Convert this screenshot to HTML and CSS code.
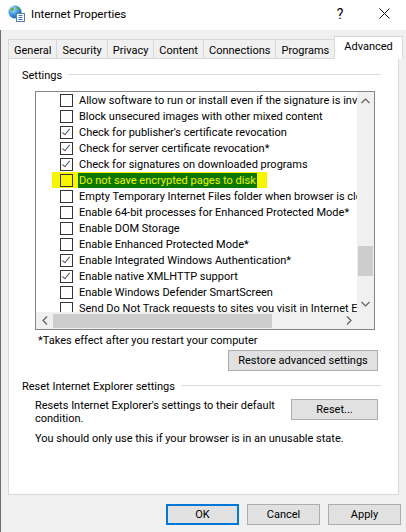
FILE: index.html
```html
<!DOCTYPE html>
<html lang="en">
<head>
  <meta charset="UTF-8" />
  <title>Internet Properties</title>
  <link rel="stylesheet" href="styles.css">
</head>
<body>
  <div class="titlebar">
    <svg class="app-icon" width="17" height="17" viewBox="0 0 17 17">
      <defs>
        <radialGradient id="globe" cx="0.35" cy="0.3" r="0.75">
          <stop offset="0" stop-color="#bfe6ff" />
          <stop offset="0.5" stop-color="#3f9be0" />
          <stop offset="1" stop-color="#1b5fa8" />
        </radialGradient>
      </defs>
      <circle cx="7" cy="7" r="6.5" fill="url(#globe)" />
      <path d="M3 3.5 C4.5 2.5 6 3 6.5 4.5 C5.5 5.5 4.5 5 4 6.5 C3 6 2.3 5 3 3.5 Z" fill="#5fae3c" />
      <path d="M8.5 2 C10 2.2 11.5 3.5 12 5 C10.8 5 10 4.2 9 4.5 C8.4 3.8 8 2.8 8.5 2 Z" fill="#5fae3c" />
      <rect x="8.5" y="8.5" width="8" height="8" fill="#fff" stroke="#5a7fa6" />
      <path d="M10.5 10.5h4M10.5 12.5h4M10.5 14.5h4" stroke="#3a78c2" stroke-width="1" />
    </svg>
    <span class="title">Internet Properties</span>
    <div class="caption">
      <span class="caption-btn help">?</span>
      <span class="caption-btn close">
        <svg width="11" height="11" viewBox="0 0 11 11"><path d="M0.5 0.5l10 10M10.5 0.5l-10 10" stroke="#111" stroke-width="1" /></svg>
      </span>
    </div>
  </div>

  <div class="window">
    <div class="tabs">
      <div class="tab">General</div>
      <div class="tab">Security</div>
      <div class="tab">Privacy</div>
      <div class="tab">Content</div>
      <div class="tab">Connections</div>
      <div class="tab">Programs</div>
      <div class="tab active">Advanced</div>
    </div>

    <div class="panel">
      <div class="group-head"><span>Settings</span><span class="rule"></span></div>

      <div class="listbox">
        <div class="items">
          <div class="item"><span class="check"></span><span class="label">Allow software to run or install even if the signature is invalid</span></div>
          <div class="item"><span class="check"></span><span class="label">Block unsecured images with other mixed content</span></div>
          <div class="item"><span class="check on"></span><span class="label">Check for publisher's certificate revocation</span></div>
          <div class="item"><span class="check on"></span><span class="label">Check for server certificate revocation*</span></div>
          <div class="item"><span class="check on"></span><span class="label">Check for signatures on downloaded programs</span></div>
          <div class="item">
            <span class="marker"><span class="check"></span><span class="label selected">Do not save encrypted pages to disk</span></span>
          </div>
          <div class="item"><span class="check"></span><span class="label">Empty Temporary Internet Files folder when browser is closed</span></div>
          <div class="item"><span class="check"></span><span class="label">Enable 64-bit processes for Enhanced Protected Mode*</span></div>
          <div class="item"><span class="check"></span><span class="label">Enable DOM Storage</span></div>
          <div class="item"><span class="check"></span><span class="label">Enable Enhanced Protected Mode*</span></div>
          <div class="item"><span class="check on"></span><span class="label">Enable Integrated Windows Authentication*</span></div>
          <div class="item"><span class="check on"></span><span class="label">Enable native XMLHTTP support</span></div>
          <div class="item"><span class="check"></span><span class="label">Enable Windows Defender SmartScreen</span></div>
          <div class="item"><span class="check"></span><span class="label">Send Do Not Track requests to sites you visit in Internet Explorer</span></div>
        </div>
        <div class="vscroll">
          <span class="arrow">
            <svg width="9" height="6" viewBox="0 0 9 6"><path d="M0.5 5L4.5 1L8.5 5" fill="none" stroke="#606060" stroke-width="1.2" /></svg>
          </span>
          <span class="track"><span class="thumb"></span></span>
          <span class="arrow">
            <svg width="9" height="6" viewBox="0 0 9 6"><path d="M0.5 1L4.5 5L8.5 1" fill="none" stroke="#606060" stroke-width="1.2" /></svg>
          </span>
        </div>
        <div class="hscroll">
          <span class="arrow">
            <svg width="6" height="9" viewBox="0 0 6 9"><path d="M5 0.5L1 4.5L5 8.5" fill="none" stroke="#606060" stroke-width="1.2" /></svg>
          </span>
          <span class="track"><span class="thumb"></span></span>
          <span class="arrow">
            <svg width="6" height="9" viewBox="0 0 6 9"><path d="M1 0.5L5 4.5L1 8.5" fill="none" stroke="#606060" stroke-width="1.2" /></svg>
          </span>
        </div>
        <div class="corner"></div>
      </div>

      <div class="note">*Takes effect after you restart your computer</div>
      <button class="btn restore">Restore advanced settings</button>

      <div class="group-head reset-head"><span>Reset Internet Explorer settings</span><span class="rule"></span></div>
      <div class="reset-row">
        <div class="reset-text">Resets Internet Explorer's settings to their default condition.</div>
        <button class="btn reset">Reset...</button>
      </div>
      <div class="warn">You should only use this if your browser is in an unusable state.</div>
    </div>

    <div class="actions">
      <button class="btn default">OK</button>
      <button class="btn">Cancel</button>
      <button class="btn">Apply</button>
    </div>
  </div>
</body>
</html>
```
FILE: styles.css
```css
* {
  box-sizing: border-box;
}
body {
  margin: 0;
  width: 406px;
  height: 532px;
  overflow: hidden;
  font-family: Roboto, "Noto Sans", sans-serif;
  font-size: 11px;
  color: #000;
  background: #f0f0f0;
}
/* Barra del titolo */
.titlebar {
  height: 30px;
  background: #fff;
  display: flex;
  align-items: center;
}
.app-icon {
  margin-left: 8px;
  margin-top: -3px;
}
.title {
  margin-left: 6px;
  font-size: 11.5px;
  margin-top: -2px;
}
.caption {
  margin-left: auto;
  display: flex;
  align-items: center;
  height: 100%;
}
.caption-btn {
  display: flex;
  align-items: center;
  justify-content: center;
  height: 100%;
  margin-top: -3px;
}
.help {
  width: 46px;
  font-size: 14px;
}
.close {
  width: 43px;
}
/* Corpo della finestra */
.window {
  height: 502px;
  border-left: 1px solid #6e6e6e;
  display: flex;
  flex-direction: column;
}
.tabs {
  display: flex;
  align-items: flex-end;
  height: 22px;
  margin-top: 6px;
  padding-left: 7px;
  position: relative;
  z-index: 1;
}
.tab {
  height: 19px;
  padding: 0 5px;
  margin-right: -1px;
  border: 1px solid #d9d9d9;
  border-bottom: none;
  background: #f0f0f0;
  display: flex;
  align-items: center;
  padding-top: 2px;
}
.tab.active {
  height: 23px;
  margin-bottom: -1px;
  padding: 0 9px 3px;
  background: #fff;
  margin-left: 0;
}
.panel {
  width: 391px;
  height: 437px;
  margin-left: 7px;
  background: #fff;
  border: 1px solid #d9d9d9;
  display: flex;
  flex-direction: column;
  padding: 0 17px 0 13px;
}
.group-head {
  display: flex;
  align-items: center;
  gap: 6px;
  height: 14px;
  margin-top: 9px;
}
.group-head .rule {
  flex: 1;
  border-top: 1px solid #dcdcdc;
  margin-top: -1px;
}
/* Lista delle impostazioni */
.listbox {
  margin: 9px 6px 0 13px;
  height: 239px;
  border: 1px solid #828790;
  display: grid;
  grid-template-columns: 1fr 17px;
  grid-template-rows: 1fr 17px;
}
.items {
  overflow: hidden;
}
.item {
  height: 16px;
  display: flex;
  align-items: center;
  padding-left: 24px;
  white-space: nowrap;
}
.check {
  flex: none;
  width: 13px;
  height: 13px;
  border: 1px solid #333;
  margin-top: 1px;
  position: relative;
}
.check.on::after {
  content: "";
  position: absolute;
  left: 3px;
  top: 0px;
  width: 3px;
  height: 7px;
  border: solid #555;
  border-width: 0 1px 1px 0;
  transform: rotate(40deg);
}
.label {
  margin-left: 6px;
}
.marker {
  display: flex;
  align-items: center;
  height: 16px;
  margin-left: -8px;
  padding: 0 10px 0 8px;
  background: #f7f500;
}
.label.selected {
  margin-left: 5px;
  padding: 0 1px;
  height: 15px;
  line-height: 15px;
  background: #0a7800;
  color: #eef500;
}
.vscroll {
  background: #f0f0f0;
  display: flex;
  flex-direction: column;
}
.vscroll .arrow, .hscroll .arrow {
  flex: none;
  width: 17px;
  height: 17px;
  display: flex;
  align-items: center;
  justify-content: center;
}
.vscroll .track {
  flex: 1;
  padding: 137px 1px 0;
}
.vscroll .thumb {
  display: block;
  height: 30px;
  background: #cdcdcd;
}
.hscroll {
  background: #f0f0f0;
  display: flex;
}
.hscroll .track {
  flex: 1;
  padding: 2px 0 0;
}
.hscroll .thumb {
  display: block;
  width: 219px;
  height: 14px;
  background: #cdcdcd;
}
.corner {
  background: #f0f0f0;
}
.note {
  margin: 4px 0 0 16px;
  line-height: 14px;
}
/* Pulsanti */
.btn {
  font-family: inherit;
  font-size: 11px;
  color: #000;
  height: 21px;
  padding: 0;
  background: #e1e1e1;
  border: 1px solid #adadad;
  border-radius: 0;
}
.restore {
  align-self: flex-end;
  width: 150px;
  margin: 2px 3px 0 0;
}
.reset-head {
  margin-top: 8px;
}
.reset-row {
  display: flex;
  align-items: flex-start;
  margin: 6px 3px 0 13px;
}
.reset-text {
  width: 250px;
  line-height: 13px;
}
.reset {
  margin-left: auto;
  width: 87px;
  margin-top: 0;
}
.warn {
  margin: 7px 0 0 13px;
  line-height: 14px;
}
.actions {
  display: flex;
  justify-content: flex-end;
  gap: 8px;
  margin: 9px 5px 0 0;
}
.actions .btn {
  width: 73px;
}
.btn.default {
  border: 2px solid #0078d7;
}
```
